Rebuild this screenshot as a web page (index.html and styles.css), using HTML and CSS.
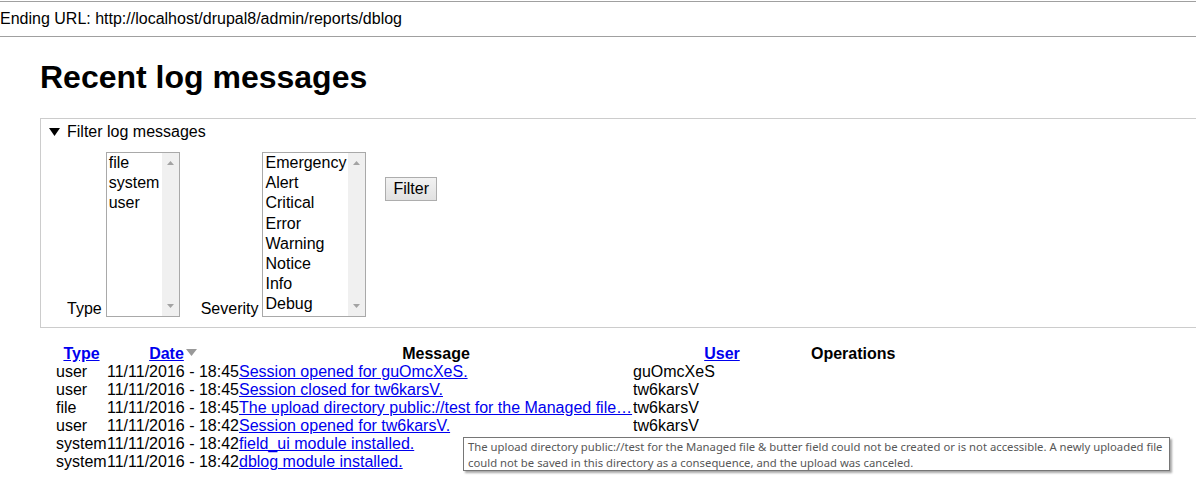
FILE: index.html
```html
<!DOCTYPE html>
<html>
<head>
<meta charset="utf-8">
<title>Recent log messages</title>
<link rel="stylesheet" href="styles.css">
</head>
<body>
<div class="url-bar">Ending URL: http://localhost/drupal8/admin/reports/dblog</div>
<main class="page">
  <h1 class="title">Recent log messages</h1>
  <section class="filters">
    <div class="summary">
      <svg class="disclosure" width="11" height="8" viewBox="0 0 11 8"><polygon points="0,0 11,0 5.5,8" fill="#000"/></svg>
      <span>Filter log messages</span>
    </div>
    <div class="filter-body">
      <div class="field">
        <span class="field-label">Type</span>
        <div class="listbox listbox-type">
          <div class="options">
            <div class="option">file</div>
            <div class="option">system</div>
            <div class="option">user</div>
          </div>
          <div class="scrollbar">
            <div class="arrow"><svg width="7" height="4" viewBox="0 0 7 4"><polygon points="0,4 7,4 3.5,0" fill="#a3a3a3"/></svg></div>
            <div class="arrow"><svg width="7" height="4" viewBox="0 0 7 4"><polygon points="0,0 7,0 3.5,4" fill="#a3a3a3"/></svg></div>
          </div>
        </div>
      </div>
      <div class="field field-severity">
        <span class="field-label">Severity</span>
        <div class="listbox listbox-severity">
          <div class="options">
            <div class="option">Emergency</div>
            <div class="option">Alert</div>
            <div class="option">Critical</div>
            <div class="option">Error</div>
            <div class="option">Warning</div>
            <div class="option">Notice</div>
            <div class="option">Info</div>
            <div class="option">Debug</div>
          </div>
          <div class="scrollbar">
            <div class="arrow"><svg width="7" height="4" viewBox="0 0 7 4"><polygon points="0,4 7,4 3.5,0" fill="#a3a3a3"/></svg></div>
            <div class="arrow"><svg width="7" height="4" viewBox="0 0 7 4"><polygon points="0,0 7,0 3.5,4" fill="#a3a3a3"/></svg></div>
          </div>
        </div>
      </div>
      <button class="filter-btn" type="button">Filter</button>
    </div>
  </section>

  <table class="log">
    <colgroup>
      <col class="c-type"><col class="c-date"><col class="c-msg"><col class="c-user"><col class="c-ops">
    </colgroup>
    <thead>
      <tr>
        <th><a href="#">Type</a></th>
        <th><a href="#">Date</a><svg class="sort" width="11" height="7" viewBox="0 0 11 7"><polygon points="0,0 11,0 5.5,7" fill="#999"/></svg></th>
        <th>Message</th>
        <th><a href="#">User</a></th>
        <th>Operations</th>
      </tr>
    </thead>
    <tbody>
      <tr><td>user</td><td>11/11/2016 - 18:45</td><td><a href="#">Session opened for guOmcXeS.</a></td><td>guOmcXeS</td><td></td></tr>
      <tr><td>user</td><td>11/11/2016 - 18:45</td><td><a href="#">Session closed for tw6karsV.</a></td><td>tw6karsV</td><td></td></tr>
      <tr><td>file</td><td>11/11/2016 - 18:45</td><td><a href="#">The upload directory public://test for the Managed file…</a></td><td>tw6karsV</td><td></td></tr>
      <tr><td>user</td><td>11/11/2016 - 18:42</td><td><a href="#">Session opened for tw6karsV.</a></td><td>tw6karsV</td><td></td></tr>
      <tr><td>system</td><td>11/11/2016 - 18:42</td><td><a href="#">field_ui module installed.</a></td><td></td><td></td></tr>
      <tr><td>system</td><td>11/11/2016 - 18:42</td><td><a href="#">dblog module installed.</a></td><td></td><td></td></tr>
    </tbody>
  </table>
</main>
<div class="tooltip">The upload directory public://test for the Managed file &amp; butter field could not be created or is not accessible. A newly uploaded file<br>could not be saved in this directory as a consequence, and the upload was canceled.</div>
</body>
</html>
```

FILE: styles.css
```css
html, body {
  overflow: hidden;
}
body {
  margin: 0;
  font-family: "Liberation Sans", Arial, sans-serif;
  font-size: 16px;
  color: #000;
  background: #fff;
  position: relative;
  min-height: 487px;
}
a {
  color: #0000ee;
  text-decoration: underline;
}
.url-bar {
  margin-top: 1px;
  border-top: 1px solid #a0a0a0;
  border-bottom: 1px solid #a0a0a0;
  padding: 8px 0 8px 0;
  line-height: 18px;
}
.page {
  padding-left: 40px;
}
.title {
  font-size: 32px;
  line-height: 37px;
  font-weight: bold;
  margin: 22px 0 22px;
}
.filters {
  border: 1px solid #cccccc;
  width: 1200px;
}
.summary {
  display: flex;
  align-items: center;
  padding: 4px 0 0 8px;
  line-height: 18px;
}
.disclosure {
  margin-right: 7px;
}
.filter-body {
  display: flex;
  align-items: flex-start;
  margin-top: 11px;
  padding: 0 0 10px 26px;
}
.field {
  display: flex;
  align-items: flex-end;
  gap: 4px;
}
.field-severity {
  margin-left: 21px;
}
.field-label {
  line-height: 18px;
  margin-bottom: -1px;
}
.listbox {
  display: flex;
  border: 1px solid #a9a9a9;
  height: 163px;
  background: #fff;
}
.listbox-type {
  width: 72px;
}
.listbox-severity {
  width: 102px;
}
.options {
  flex: 1;
  padding-left: 2px;
  line-height: 20.2px;
  white-space: nowrap;
  overflow: hidden;
}
.scrollbar {
  width: 17px;
  background: #f0f0f0;
  display: flex;
  flex-direction: column;
  justify-content: space-between;
}
.arrow {
  height: 20px;
  display: flex;
  align-items: center;
  justify-content: center;
}
.filter-btn {
  margin-left: 19px;
  margin-top: 25px;
  font-family: "Liberation Sans", Arial, sans-serif;
  font-size: 16px;
  line-height: 18px;
  padding: 2px 7px 2px;
  height: 24px;
  border: 1px solid #adadad;
  border-radius: 0;
  background: linear-gradient(#f2f2f2, #e1e1e1);
  color: #000;
}
.log {
  margin: 17px 0 0 16px;
  border-collapse: collapse;
  table-layout: fixed;
  width: 839px;
}
.c-type { width: 51px; }
.c-date { width: 132px; }
.c-msg { width: 394px; }
.c-user { width: 178px; }
.c-ops { width: 84px; }
.log th, .log td {
  padding: 0;
  line-height: 18px;
  white-space: nowrap;
}
.log th {
  text-align: center;
  font-weight: bold;
}
.log td {
  text-align: left;
  overflow: hidden;
}
.sort {
  margin-left: 2px;
  vertical-align: 3px;
}
.tooltip {
  position: absolute;
  left: 463px;
  top: 437px;
  width: 697px;
  height: 30px;
  padding: 1px 4px;
  border: 1px solid #767676;
  background: #fff;
  box-shadow: 2px 2px 2px rgba(0, 0, 0, 0.35);
  font-family: "Noto Sans", "Open Sans", sans-serif;
  font-size: 11.3px;
  line-height: 16px;
  color: #575757;
  white-space: nowrap;
}
```
